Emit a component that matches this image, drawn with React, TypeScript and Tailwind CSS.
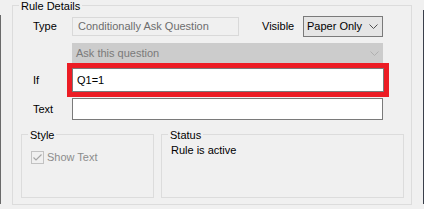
import React from 'react';

const font = { fontFamily: '"Liberation Sans", Arial, sans-serif' };

const Chevron = ({ color }: { color: string }) => (
  <svg width="9" height="5" viewBox="0 0 9 5" className="shrink-0">
    <path d="M0.5 0.5 L4.5 4.5 L8.5 0.5" fill="none" stroke={color} strokeWidth="1" />
  </svg>
);

const GroupBox = ({ title, className, children }: { title: string; className: string; children?: React.ReactNode }) => (
  <div className={`relative border border-[#dcdcdc] ${className}`}>
    <span className="absolute -top-[6px] left-[6px] bg-[#f0f0f0] px-[2px] leading-[12px]">{title}</span>
    {children}
  </div>
);

export default function App() {
  return (
    <div className="flex w-[424px] h-[209px] bg-[#f0f0f0] text-[11px] text-black overflow-hidden" style={font}>
      {/* edge of the window behind */}
      <div className="w-px h-[189px] mt-[15px] bg-[#6a6a6a] shrink-0" />

      <div className="flex-1">
        <GroupBox title="Rule Details" className="ml-[11px] mt-[5px] w-[400px] h-[200px]">
          {/* Type / Visible */}
          <div className="flex items-center h-[21px] mt-[10px] pl-[20px]">
            <span className="w-[39px]">Type</span>
            <div className="w-[167px] h-[19px] border border-[#d9d9d9] flex items-center pl-[5px] text-[#6d6d6d]">
              Conditionally Ask Question
            </div>
            <span className="ml-[23px] w-[41px]">Visible</span>
            <div className="w-[80px] h-[21px] border border-[#7a7a7a] bg-[#e5e5e5] flex items-center justify-between pl-[3px] pr-[4px]">
              <span>Paper Only</span>
              <Chevron color="#505050" />
            </div>
          </div>

          {/* Action */}
          <div className="flex items-center mt-[6px] pl-[59px]">
            <div className="w-[311px] h-[20px] bg-[#cccccc] flex items-center justify-between pl-[4px] pr-[4px] text-[#7a7a7a]">
              <span>Ask this question</span>
              <Chevron color="#b0b0b0" />
            </div>
          </div>

          {/* If */}
          <div className="flex items-center mt-[5px] pl-[20px]">
            <span className="w-[39px]">If</span>
            <div className="w-[312px] h-[24px] border border-[#7a7a7a] bg-white flex items-center pl-[4px] outline-[5px] outline-solid outline-[#ec1c24]">
              Q1=1
            </div>
          </div>

          {/* Text */}
          <div className="flex items-center mt-[6px] pl-[20px]">
            <span className="w-[39px]">Text</span>
            <div className="w-[311px] h-[22px] border border-[#7a7a7a] bg-white" />
          </div>

          {/* Style / Status */}
          <div className="flex mt-[14px] pl-[8px] gap-[7px]">
            <GroupBox title="Style" className="w-[133px] h-[64px]">
              <div className="flex items-center mt-[14px] ml-[9px] gap-[3px] text-[#8c8c8c]">
                <svg width="13" height="13" viewBox="0 0 13 13" className="shrink-0">
                  <rect x="0.5" y="0.5" width="12" height="12" fill="#f0f0f0" stroke="#c2c2c2" />
                  <path d="M2.5 6.5 L5 9 L10.5 3.5" fill="none" stroke="#a6a6a6" strokeWidth="1.2" />
                </svg>
                <span>Show Text</span>
              </div>
            </GroupBox>
            <GroupBox title="Status" className="w-[243px] h-[64px]">
              <div className="mt-[7px] ml-[9px]">Rule is active</div>
            </GroupBox>
          </div>
        </GroupBox>
      </div>

      <div className="w-px h-[194px] mt-[10px] bg-[#3a3f4a] shrink-0" />
    </div>
  );
}
